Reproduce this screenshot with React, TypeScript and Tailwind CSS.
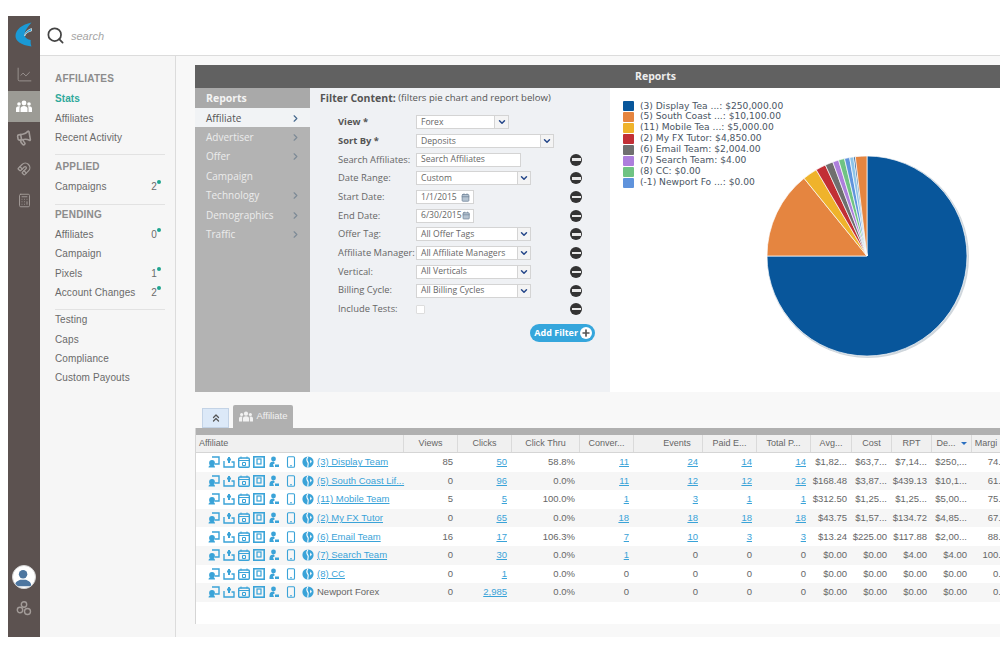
import React from 'react';
import { Search, ChevronRight, ChevronDown, ChevronsUp, Calendar, Megaphone, Magnet, Calculator, ChartLine, Plus } from 'lucide-react';

const sans = 'font-["Liberation_Sans",Arial,sans-serif]';
const verdana = 'font-["DejaVu_Sans",Verdana,sans-serif]';
const open = 'font-["Open_Sans",Verdana,sans-serif]';

function Logo() {
  return (
    <svg width="18" height="25" viewBox="0 0 18 25">
      <path d="M16.500 0.500C7 2.500 0.500 7.500 0.500 14c0 5 5 9 16 10.500-.8-2-1-4-.8-6.500-3-.5-5.500-1.800-6-4.200C9 10 12 6 16.500 0.500z" fill="#1a9ad6" />
      <path d="M16.500 6.500C12.500 8 9.500 10.500 9.700 14c1-2.500 3.500-4.500 6.800-5z" fill="#1a9ad6" stroke="#fff" strokeWidth="0.6" />
    </svg>
  );
}

function People({ size }: { size: number }) {
  return (
    <svg width={size} height={size * 0.75} viewBox="0 0 16 12" fill="currentColor">
      <circle cx="8" cy="3" r="2.400" />
      <circle cx="3" cy="4" r="1.800" />
      <circle cx="13" cy="4" r="1.800" />
      <path d="M4.500 12V8.500C4.500 7 6 6 8 6s3.500 1 3.500 2.500V12z" />
      <path d="M0 12V8.500C0 7 1.300 6.300 3 6.300c.5 0 .8.100 1 .2-.4.500-.5 1.200-.5 2V12zM16 12V8.500c0-1.500-1.300-2.200-3-2.200-.5 0-.8.100-1 .2.400.500.5 1.200.5 2V12z" />
    </svg>
  );
}

function RailIcon({ active, children }: { active?: boolean; children: React.ReactNode }) {
  return (
    <div className={`h-[31.5px] flex items-center justify-center ${active ? 'bg-[#9c9b95] text-white' : 'text-[#a39c99]'}`}>
      {children}
    </div>
  );
}

function Rail() {
  return (
    <div className="w-[32px] shrink-0 bg-[#5c5250] flex flex-col items-stretch pt-[6px] pb-[21px]">
      <div className="flex justify-center h-[37px]"><Logo /></div>
      <div>
        <RailIcon><ChartLine size={17} strokeWidth={1.2} /></RailIcon>
        <RailIcon active><People size={16} /></RailIcon>
        <RailIcon><Megaphone size={16} strokeWidth={2.4} className="-rotate-[10deg]" /></RailIcon>
        <RailIcon><Magnet size={14} strokeWidth={2.2} /></RailIcon>
        <RailIcon><Calculator size={15} strokeWidth={1.5} /></RailIcon>
      </div>
      <div className="mt-auto flex flex-col items-center gap-[11px]">
        <div className="w-[24px] h-[24px] rounded-full bg-white border border-[#d5d5d5] overflow-hidden">
          <svg viewBox="0 0 24 24" width="22" height="22">
            <circle cx="11" cy="9" r="4.600" fill="#4d76a0" />
            <path d="M2 22c0-5 4-6 6-7h6c2 1 6 2 6 7z" fill="#4d76a0" />
          </svg>
        </div>
        <svg width="16" height="16" viewBox="0 0 16 16" fill="none" stroke="#a39c99" strokeWidth="1.400">
          <circle cx="8" cy="4.500" r="2.700" />
          <circle cx="4" cy="10" r="2.700" />
          <circle cx="11.500" cy="11.500" r="3" />
        </svg>
      </div>
    </div>
  );
}

function SideItem({ label, count, active }: { label: string; count?: string; active?: boolean }) {
  return (
    <div className={`h-[19.4px] flex items-center justify-between text-[10px] tracking-[0.1px] ${active ? 'text-[#2fa99b] font-bold' : 'text-[#6a6a6a]'}`}>
      <span>{label}</span>
      {count && (
        <span className="flex items-start mr-[4px]">
          {count}
          <span className="w-[4px] h-[4px] rounded-full bg-[#1fa58f] mt-[1px]" />
        </span>
      )}
    </div>
  );
}

function SideHead({ label }: { label: string }) {
  return <div className="h-[19px] flex items-center text-[10px] font-bold tracking-[0.2px] text-[#8c8c8c]">{label}</div>;
}

function Sidebar() {
  return (
    <div className={`${sans} w-[136px] shrink-0 bg-[#f6f6f6] border-r border-[#dcdcdc] pl-[15px] pr-[10px] pt-[13px]`}>
      <SideHead label="AFFILIATES" />
      <div className="mt-[1px]">
        <SideItem label="Stats" active />
        <SideItem label="Affiliates" />
        <SideItem label="Recent Activity" />
      </div>
      <div className="h-px bg-[#e2e2e2] mt-[7px] mb-[2px]" />
      <SideHead label="APPLIED" />
      <div className="mt-[1px]"><SideItem label="Campaigns" count="2" /></div>
      <div className="h-px bg-[#e2e2e2] mt-[7px]" />
      <SideHead label="PENDING" />
      <div className="mt-[1px]">
        <SideItem label="Affiliates" count="0" />
        <SideItem label="Campaign" />
        <SideItem label="Pixels" count="1" />
        <SideItem label="Account Changes" count="2" />
      </div>
      <div className="h-px bg-[#e2e2e2] mt-[7px]" />
      <SideItem label="Testing" />
      <SideItem label="Caps" />
      <SideItem label="Compliance" />
      <SideItem label="Custom Payouts" />
    </div>
  );
}

const navItems = ['Affiliate', 'Advertiser', 'Offer', 'Campaign', 'Technology', 'Demographics', 'Traffic'];

function ReportNav() {
  return (
    <div className={`${open} w-[115px] shrink-0 bg-[#b3b3b3] text-[10px]`}>
      <div className="h-[20px] bg-[#a9a9a9] flex items-center pl-[11px] pt-[1px] text-[10.500px] font-bold text-[#f4f4f4]">Reports</div>
      {navItems.map((n, i) => (
        <div key={n} className={`h-[19.4px] flex items-center justify-between pl-[11px] pr-[9px] pt-[1px] ${i === 0 ? 'bg-[#f1f3f5] text-[#555]' : 'text-[#ececec]'}`}>
          <span>{n}</span>
          {n !== 'Campaign' && <ChevronRight size={11} strokeWidth={2.500} className={i === 0 ? 'text-[#44678c]' : 'text-[#7d8a96]'} />}
        </div>
      ))}
    </div>
  );
}

function Select({ value, w, arrow }: { value: string; w: string; arrow: string }) {
  return (
    <div className={`${w} h-[14px] bg-white border border-[#d4d4d4] flex items-center text-[8.600px] text-[#666]`}>
      <span className="flex-1 pl-[4px] whitespace-nowrap overflow-hidden">{value}</span>
      <span className={`${arrow} shrink-0 h-full border-l border-[#d4d4d4] bg-[#f4f4f4] flex items-center justify-center`}>
        <ChevronDown size={10} strokeWidth={3.500} className="text-[#25478a]" />
      </span>
    </div>
  );
}

function Input({ value, w, date }: { value: string; w: string; date?: boolean }) {
  return (
    <div className={`${w} h-[14px] bg-white border border-[#d4d4d4] flex items-center justify-between pl-[4px] pr-[3px] text-[8.600px] text-[#666]`}>
      <span>{value}</span>
      {date && <Calendar size={9} className="text-[#6d8197]" fill="#b5c3d1" />}
    </div>
  );
}

function Minus() {
  return (
    <span className="w-[12px] h-[12px] rounded-full bg-[#333] flex items-center justify-center">
      <span className="w-[9px] h-[2.500px] bg-[#e8e8e8]" />
    </span>
  );
}

function FilterRow({ label, bold, remove, children }: { label: string; bold?: boolean; remove?: boolean; children: React.ReactNode }) {
  return (
    <div className="h-[18.7px] flex items-center">
      <span className={`w-[78px] shrink-0 whitespace-nowrap text-[9.400px] ${bold ? 'font-bold text-[#555]' : 'text-[#666]'}`}>{label}</span>
      <div className="w-[154px] shrink-0">{children}</div>
      {remove && <Minus />}
    </div>
  );
}

function FilterPanel() {
  return (
    <div className={`${open} w-[300px] shrink-0 bg-[#eff1f4] pl-[10px]`}>
      <div className="h-[21px] flex items-center text-[9.600px] text-[#555] whitespace-nowrap">
        <b className="text-[10.500px]">Filter Content:</b>&nbsp;(filters pie chart and report below)
      </div>
      <div className="pl-[18px] pt-[4px]">
        <FilterRow label="View *" bold><Select value="Forex" w="w-[93px]" arrow="w-[14px]" /></FilterRow>
        <FilterRow label="Sort By *" bold><Select value="Deposits" w="w-[138px]" arrow="w-[13px]" /></FilterRow>
        <FilterRow label="Search Affiliates:" remove><Input value="Search Affiliates" w="w-[105px]" /></FilterRow>
        <FilterRow label="Date Range:" remove><Select value="Custom" w="w-[115px]" arrow="w-[13px]" /></FilterRow>
        <FilterRow label="Start Date:" remove><Input value="1/1/2015" w="w-[58px]" date /></FilterRow>
        <FilterRow label="End Date:" remove><Input value="6/30/2015" w="w-[58px]" date /></FilterRow>
        <FilterRow label="Offer Tag:" remove><Select value="All Offer Tags" w="w-[115px]" arrow="w-[13px]" /></FilterRow>
        <FilterRow label="Affiliate Manager:" remove><Select value="All Affiliate Managers" w="w-[115px]" arrow="w-[13px]" /></FilterRow>
        <FilterRow label="Vertical:" remove><Select value="All Verticals" w="w-[115px]" arrow="w-[13px]" /></FilterRow>
        <FilterRow label="Billing Cycle:" remove><Select value="All Billing Cycles" w="w-[115px]" arrow="w-[13px]" /></FilterRow>
        <FilterRow label="Include Tests:" remove>
          <span className="block w-[9px] h-[9px] bg-white border border-[#ddd] rounded-[1px]" />
        </FilterRow>
      </div>
      <div className="flex justify-end pr-[15px] mt-[5px]">
        <div className="w-[65px] h-[18px] rounded-full bg-[#35a6dc] flex items-center justify-end gap-[2px] pr-[3px] text-[9px] font-bold text-white">
          <span>Add Filter</span>
          <span className="w-[12px] h-[12px] rounded-full bg-white flex items-center justify-center">
            <Plus size={10} strokeWidth={4} className="text-[#555]" />
          </span>
        </div>
      </div>
    </div>
  );
}

const legend = [
  ['#08569b', '(3) Display Tea ...: $250,000.00'],
  ['#e58540', '(5) South Coast ...: $10,100.00'],
  ['#efb32b', '(11) Mobile Tea ...: $5,000.00'],
  ['#c22f35', '(2) My FX Tutor: $4,850.00'],
  ['#6f6f6f', '(6) Email Team: $2,004.00'],
  ['#ad7fdc', '(7) Search Team: $4.00'],
  ['#6fc383', '(8) CC: $0.00'],
  ['#5f93dc', '(-1) Newport Fo ...: $0.00'],
];

const slices: [number, string][] = [
  [270, '#08569b'],
  [321, '#e58540'],
  [329.5, '#efb32b'],
  [335.4, '#c22f35'],
  [340, '#6f6f6f'],
  [343.5, '#ad7fdc'],
  [347, '#6fc383'],
  [350, '#5f93dc'],
  [352.3, '#8cc3e8'],
  [353.3, '#1e5c98'],
  [360, '#e58540'],
];

function Pie() {
  const c = 102;
  const r = 100;
  let from = 0;
  const pt = (a: number) => {
    const t = (a * Math.PI) / 180;
    return `${c + r * Math.sin(t)} ${c - r * Math.cos(t)}`;
  };
  return (
    <svg width="206" height="206" viewBox="0 0 206 206">
      <circle cx={c + 1} cy={c + 1} r={r + 1} fill="#cfd6dc" />
      {slices.map(([to, color]) => {
        const d = `M${c} ${c}L${pt(from)}A${r} ${r} 0 ${to - from > 180 ? 1 : 0} 1 ${pt(to)}Z`;
        from = to;
        return <path key={to} d={d} fill={color} stroke="#fff" strokeWidth="0.7" strokeLinejoin="round" />;
      })}
    </svg>
  );
}

function ChartPanel() {
  return (
    <div className="flex-1 bg-white flex pl-[13px] pt-[13px]">
      <div className={`${verdana} w-[170px] shrink-0 text-[9.150px] text-[#4a5563]`}>
        {legend.map(([color, text]) => (
          <div key={text} className="h-[10.9px] flex items-center whitespace-nowrap">
            <span className="w-[11px] h-[10px] shrink-0 rounded-[1px] mr-[6px]" style={{ background: color }} />
            <span>{text}</span>
          </div>
        ))}
      </div>
      <div className="ml-[-28px] mt-[53px]"><Pie /></div>
    </div>
  );
}

function RowIcons() {
  const s = { fill: 'none', stroke: '#3aa3d8', strokeWidth: 1.4 };
  return (
    <div className="flex items-center gap-[3px] shrink-0">
      <svg width="12" height="12" viewBox="0 0 12 12" {...s}>
        <path d="M4 1h7v7H7" />
        <circle cx="4" cy="7" r="2.200" fill="#3aa3d8" />
        <path d="M0.500 11.500c0-2 2-2.500 3.500-2.500s3 .5 3 2.500z" fill="#3aa3d8" stroke="none" />
      </svg>
      <svg width="12" height="12" viewBox="0 0 12 12" {...s}>
        <path d="M1 5v6h10V6H8.500" />
        <path d="M6 1v6M4 3.500h4" strokeWidth="2" />
      </svg>
      <svg width="12" height="12" viewBox="0 0 12 12" {...s}>
        <rect x="0.700" y="2" width="10.600" height="9.300" rx="1" />
        <path d="M0.700 4.500h10.600M3 0.500v2M9 0.500v2M4.500 6.500h3v3h-3z" strokeWidth="1" />
      </svg>
      <svg width="12" height="12" viewBox="0 0 12 12" {...s}>
        <rect x="0.800" y="0.800" width="10.400" height="10.400" strokeWidth="1.600" />
        <rect x="4" y="3" width="4" height="5" strokeWidth="1.200" />
      </svg>
      <svg width="12" height="12" viewBox="0 0 12 12" fill="#3aa3d8">
        <circle cx="5.500" cy="3" r="2.400" />
        <path d="M1.500 9c0-2.500 2-3.500 4-3.500l1.500 1.500-2 1.500 1 2.500H1.500zM7 8.500h4v2.500H7z" />
      </svg>
      <svg width="12" height="12" viewBox="0 0 12 12" className="ml-[2px]" {...s}>
        <rect x="2.500" y="0.700" width="7" height="10.600" rx="1" strokeWidth="1.100" />
        <path d="M5 9.800h2" strokeWidth="1" />
      </svg>
      <svg width="12" height="12" viewBox="0 0 12 12" className="ml-[2px]">
        <circle cx="6" cy="6" r="5.600" fill="#3aa3d8" />
        <path d="M6 0.500C5 2 4.500 3 5 4.500s1.500 2 1.200 3.500S5.500 10.500 6 11.500" fill="none" stroke="#fff" strokeWidth="1.100" />
        <path d="M8.500 3.500 9.800 5.500 8.500 7.500 8 5.500z" fill="#fff" />
      </svg>
    </div>
  );
}

type Cell = { v: string; link?: boolean };
const L = (v: string): Cell => ({ v, link: true });
const T = (v: string): Cell => ({ v });

const rows: { name: string; link: boolean; cells: Cell[] }[] = [
  { name: '(3) Display Team', link: true, cells: [T('85'), L('50'), T('58.8%'), L('11'), L('24'), L('14'), L('14'), T('$1,82...'), T('$63,7...'), T('$7,14...'), T('$250,...'), T('74.')] },
  { name: '(5) South Coast Lif...', link: true, cells: [T('0'), L('96'), T('0.0%'), L('11'), L('12'), L('12'), L('12'), T('$168.48'), T('$3,87...'), T('$439.13'), T('$10,1...'), T('61.')] },
  { name: '(11) Mobile Team', link: true, cells: [T('5'), L('5'), T('100.0%'), L('1'), L('3'), L('1'), L('1'), T('$312.50'), T('$1,25...'), T('$1,25...'), T('$5,00...'), T('75.')] },
  { name: '(2) My FX Tutor', link: true, cells: [T('0'), L('65'), T('0.0%'), L('18'), L('18'), L('18'), L('18'), T('$43.75'), T('$1,57...'), T('$134.72'), T('$4,85...'), T('67.')] },
  { name: '(6) Email Team', link: true, cells: [T('16'), L('17'), T('106.3%'), L('7'), L('10'), L('3'), L('3'), T('$13.24'), T('$225.00'), T('$117.88'), T('$2,00...'), T('88.')] },
  { name: '(7) Search Team', link: true, cells: [T('0'), L('30'), T('0.0%'), L('1'), T('0'), T('0'), T('0'), T('$0.00'), T('$0.00'), T('$4.00'), T('$4.00'), T('100.')] },
  { name: '(8) CC', link: true, cells: [T('0'), L('1'), T('0.0%'), T('0'), T('0'), T('0'), T('0'), T('$0.00'), T('$0.00'), T('$0.00'), T('$0.00'), T('0.')] },
  { name: 'Newport Forex', link: false, cells: [T('0'), L('2,985'), T('0.0%'), T('0'), T('0'), T('0'), T('0'), T('$0.00'), T('$0.00'), T('$0.00'), T('$0.00'), T('0.')] },
];

const heads = ['Views', 'Clicks', 'Click Thru', 'Conver...', 'Events', 'Paid E...', 'Total P...', 'Avg...', 'Cost', 'RPT', 'De...', 'Margi'];
const cols = 'grid grid-cols-[208px_54px_54px_68px_54px_69px_54px_54px_41px_40px_40px_40px_29px] w-[805px]';

function ReportTable() {
  return (
    <div className={`${sans} bg-white h-[196px] border-l border-[#d5d5d5] overflow-hidden`}>
      <div className="h-[7px] bg-[#b0b0b0]" />
      <div className={`${cols} h-[18px] bg-[#f0f0f0] border-b border-[#d5d5d5] text-[9px] text-[#666]`}>
        <div className="flex items-center pl-[3px] border-r border-[#dadada]">Affiliate</div>
        {heads.map((h) => (
          <div key={h} className={`flex items-center justify-center border-r border-[#dadada] whitespace-nowrap gap-[2px] ${h === 'Events' ? 'pl-[18px]' : ''}`}>
            {h}
            {h === 'De...' && <span className="w-0 h-0 border-x-[3px] border-x-transparent border-t-[3px] border-t-[#2a6fc0] ml-[3px]" />}
          </div>
        ))}
      </div>
      {rows.map((r, i) => (
        <div key={r.name} className={`${cols} h-[18.6px] items-center text-[9.500px] text-[#666] ${i % 2 ? 'bg-[#f6f6f6]' : 'bg-white'}`}>
          <div className="flex items-center pl-[12px] gap-[3px] whitespace-nowrap">
            <RowIcons />
            <span className={r.link ? 'text-[#3aa3d8] underline' : ''}>{r.name}</span>
          </div>
          {r.cells.map((c, j) => (
            <div key={j} className={`text-right whitespace-nowrap ${j === 11 ? 'pr-0' : 'pr-[5px]'} ${c.link ? 'text-[#3aa3d8] underline' : ''}`}>{c.v}</div>
          ))}
        </div>
      ))}
    </div>
  );
}

function Tabs() {
  return (
    <div className={`${sans} h-[36px] flex items-end pl-[7px] gap-[4px]`}>
      <div className="w-[27px] h-[20px] bg-[#dce9f8] border border-[#c3d3e6] flex items-center justify-center">
        <ChevronsUp size={12} strokeWidth={2.500} className="text-[#555]" />
      </div>
      <div className="w-[60px] h-[23px] bg-[#b0b0b0] rounded-t-[2px] flex items-center justify-center gap-[4px] text-[9.500px] text-[#f2f2f2]">
        <People size={14} />
        <span>Affiliate</span>
      </div>
    </div>
  );
}

export default function App() {
  return (
    <div className="w-[1000px] h-[656px] bg-white overflow-hidden pt-[16px] pl-[8px] pb-[19px]">
      <div className="flex h-full">
        <Rail />
        <div className="flex-1 min-w-0 flex flex-col">
          <div className="h-[40px] bg-white border-b border-[#dcdcdc] flex items-center pl-[6px] gap-[6px] shrink-0">
            <Search size={19} strokeWidth={2.200} className="text-[#444]" />
            <span className={`${sans} italic text-[11px] text-[#a5a5a5] mt-[1px]`}>search</span>
          </div>
          <div className="flex-1 flex min-h-0">
            <Sidebar />
            <div className="flex-1 min-w-0 bg-[#f8f8f8] pl-[19px] pt-[9px]">
              <div className={`${open} h-[23px] bg-[#616161] flex items-center justify-center pl-[116px] text-[10.500px] font-bold text-[#eee]`}>Reports</div>
              <div className="flex h-[304px]">
                <ReportNav />
                <FilterPanel />
                <ChartPanel />
              </div>
              <Tabs />
              <ReportTable />
            </div>
          </div>
        </div>
      </div>
    </div>
  );
}
